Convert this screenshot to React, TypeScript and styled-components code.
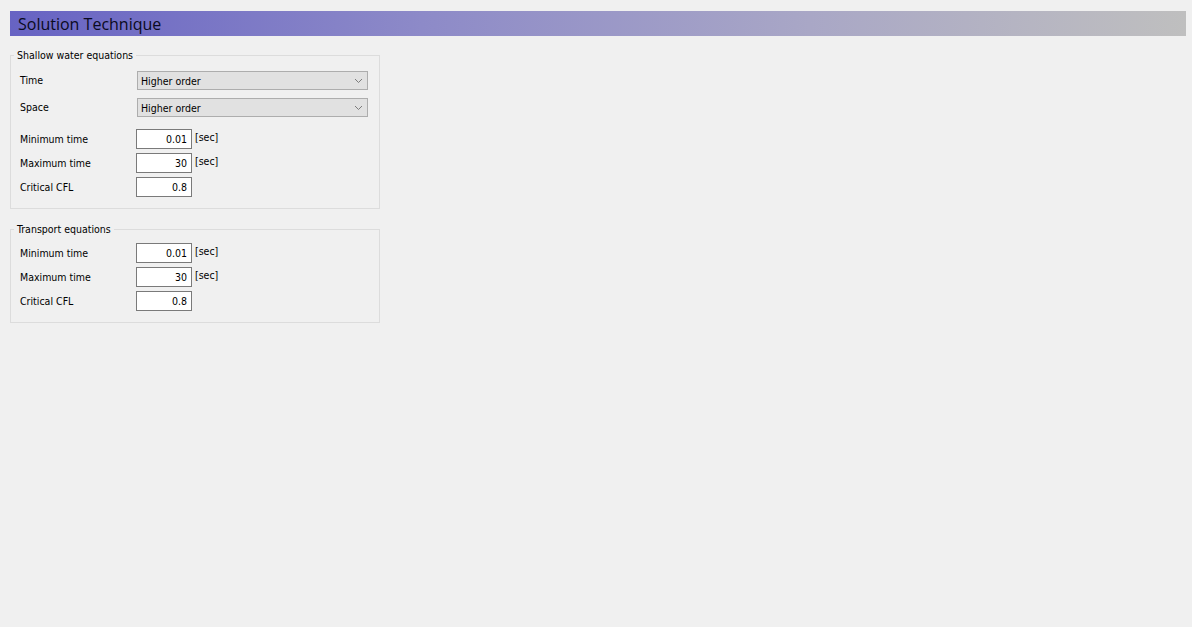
import React from "react";
import styled, { createGlobalStyle } from "styled-components";

const GlobalStyle = createGlobalStyle`
  html, body {
    margin: 0;
    padding: 0;
    background: #f0f0f0;
  }
  body {
    font-family: "DejaVu Sans Condensed", "DejaVu Sans", sans-serif;
    font-size: 10.5px;
    color: #000;
  }
`;

const Page = styled.div`
  padding: 11px 6px 0 10px;
  min-height: 616px;
`;

const TitleBar = styled.div`
  height: 25px;
  display: flex;
  align-items: center;
  padding-left: 8px;
  background: linear-gradient(90deg, #6763c3 0%, #8d8ac8 35%, #a9a7c6 68%, #bfbfbf 100%);
  font-family: "Open Sans", "Noto Sans", sans-serif;
  font-size: 16px;
  color: #0a0a20;
`;

const Groups = styled.div`
  display: flex;
  flex-direction: column;
  gap: 14px;
  margin-top: 13px;
  width: 370px;
`;

const Group = styled.fieldset<{ $top: number }>`
  margin: 0;
  padding: ${({ $top }) => $top}px 9px 11px 9px;
  border: 1px solid #dcdcdc;
  min-width: 0;
`;

const Legend = styled.legend`
  margin-left: -6px;
  padding: 0 3px;
  line-height: 13px;
`;

const Rows = styled.div`
  display: grid;
  grid-template-columns: 116px auto;
  row-gap: 4px;
  align-items: center;
`;

const Spacer = styled.div`
  grid-column: 1 / span 2;
  height: 2px;
`;

const Label = styled.span`
  line-height: 19px;
`;

const Select = styled.div`
  margin: 2px 0 2px 1px;
  height: 17px;
  width: 222px;
  border: 1px solid #adadad;
  background: #e1e1e1;
  display: flex;
  align-items: center;
  justify-content: space-between;
  padding: 0 4px 0 3px;
`;

const Chevron = () => (
  <svg width="9" height="6" viewBox="0 0 9 6">
    <path d="M1 1 L4.5 4.5 L8 1" fill="none" stroke="#7c7c7c" strokeWidth="1" />
  </svg>
);

const Field = styled.div`
  display: flex;
  align-items: flex-start;
  gap: 3px;
`;

const NumberBox = styled.div`
  width: 50px;
  height: 18px;
  border: 1px solid #7a7a7a;
  background: #fff;
  text-align: right;
  padding-right: 4px;
  line-height: 18px;
`;

const Unit = styled.span`
  line-height: 17px;
`;

type Value = { label: string; value: string; unit?: string };

const ValueRows = ({ values }: { values: Value[] }) => (
  <>
    {values.map((v) => (
      <React.Fragment key={v.label}>
        <Label>{v.label}</Label>
        <Field>
          <NumberBox>{v.value}</NumberBox>
          {v.unit && <Unit>{v.unit}</Unit>}
        </Field>
      </React.Fragment>
    ))}
  </>
);

const timeValues: Value[] = [
  { label: "Minimum time", value: "0.01", unit: "[sec]" },
  { label: "Maximum time", value: "30", unit: "[sec]" },
  { label: "Critical CFL", value: "0.8" },
];

export default function App() {
  return (
    <Page>
      <GlobalStyle />
      <TitleBar>Solution Technique</TitleBar>
      <Groups>
        <Group $top={7}>
          <Legend>Shallow water equations</Legend>
          <Rows>
            <Label>Time</Label>
            <Select>
              <span>Higher order</span>
              <Chevron />
            </Select>
            <Label>Space</Label>
            <Select>
              <span>Higher order</span>
              <Chevron />
            </Select>
            <Spacer />
            <ValueRows values={timeValues} />
          </Rows>
        </Group>
        <Group $top={7}>
          <Legend>Transport equations</Legend>
          <Rows>
            <ValueRows values={timeValues} />
          </Rows>
        </Group>
      </Groups>
    </Page>
  );
}
